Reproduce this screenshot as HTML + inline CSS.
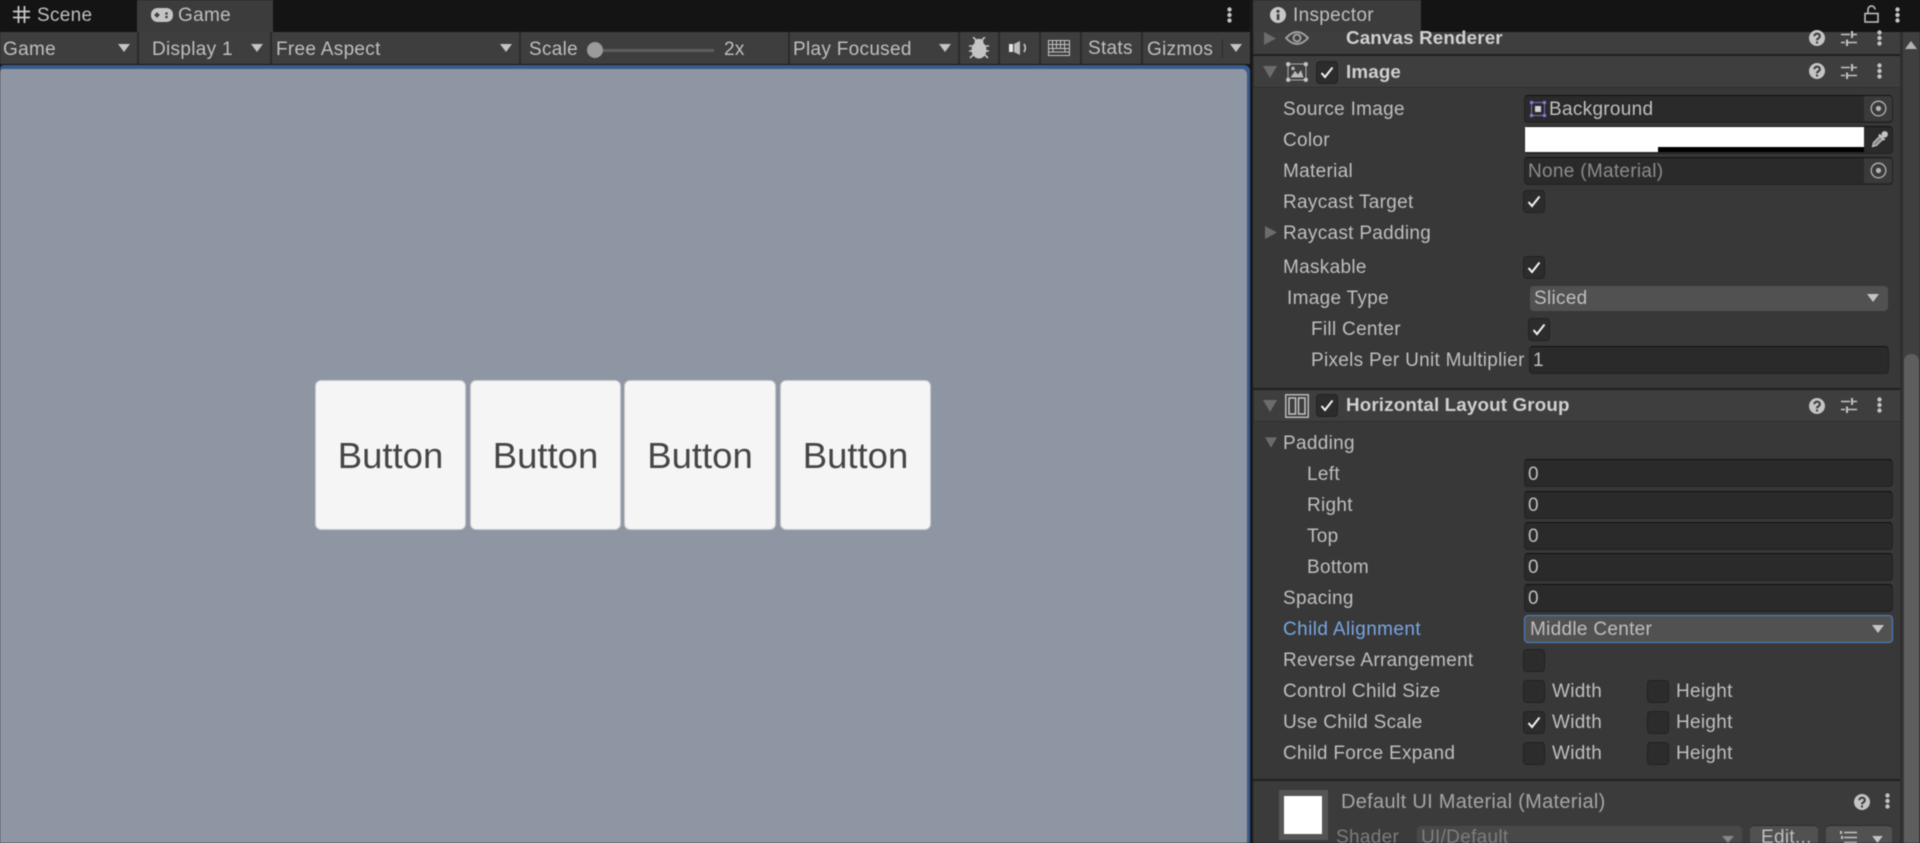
<!DOCTYPE html>
<html><head><meta charset="utf-8"><style>
html,body{margin:0;padding:0;width:1920px;height:843px;overflow:hidden;background:#191919}
body{position:relative;font-family:"Liberation Sans",sans-serif}
div,svg{position:absolute}
#w{left:0;top:0;width:1920px;height:843px;filter:blur(.45px)}
.t{white-space:nowrap;font-size:19px;line-height:22px;letter-spacing:.3px;color:#bfbfbf}
.b{font-weight:bold;color:#d0d0d0;font-size:18.8px;letter-spacing:.15px}
.d{color:#9a9a9a}
.sep{top:32px;height:32px;width:2px;background:#2b2b2b}
.f{left:1524px;width:367px;height:26px;background:#2a2a2a;border:1px solid #222;border-top-color:#111;border-radius:4px}
.c{width:20px;height:21px;background:#2c2c2c;border:1px solid #222;border-radius:4px}
.c svg{left:3px;top:4px}
.btn{top:380px;height:150px;background:#f5f5f5;border:1px solid #c6c8cc;border-radius:6px;box-sizing:border-box;color:#454545;font-size:36.5px;line-height:150px;text-align:center}
.hdr{left:1254px;width:646px;background:#3e3e3e}
</style></head><body>
<svg width="0" height="0" style="position:absolute"><defs>
<symbol id="dn" viewBox="0 0 12 8"><polygon points="0,0 12,0 6,8" fill="#c4c4c4"/></symbol>
<symbol id="fd" viewBox="0 0 14 12"><polygon points="0,0 14,0 7,12" fill="#6c6c6c"/></symbol>
<symbol id="fr" viewBox="0 0 12 13"><polygon points="0,0 12,6.500 0,13" fill="#6c6c6c"/></symbol>
<symbol id="ck" viewBox="0 0 14 13"><path d="M1.500 7 L5 11 L12.500 1.500" fill="none" stroke="#f2f2f2" stroke-width="2"/></symbol>
<symbol id="hp" viewBox="0 0 16 16"><circle cx="8" cy="8" r="8" fill="#c4c4c4"/><path d="M5.400 6.200 A2.700 2.500 0 1 1 9.600 8.200 Q8 9 8 10.400" fill="none" stroke="#3a3a3a" stroke-width="2"/><rect x="7" y="11.500" width="2" height="2" fill="#3a3a3a"/></symbol>
<symbol id="sl" viewBox="0 0 16 15"><path d="M0 3.500H9M12 3.500H16M7 11.500H16M0 11.500H4" fill="none" stroke="#c4c4c4" stroke-width="1.600"/><rect x="10" y="0" width="2" height="7" fill="#c4c4c4"/><rect x="5" y="8.500" width="2" height="6.500" fill="#c4c4c4"/></symbol>
<symbol id="dt" viewBox="0 0 5 16"><circle cx="2.500" cy="2.500" r="2.200" fill="#c4c4c4"/><circle cx="2.500" cy="8" r="2.200" fill="#c4c4c4"/><circle cx="2.500" cy="13.500" r="2.200" fill="#c4c4c4"/></symbol>
<symbol id="tg" viewBox="0 0 17 17"><circle cx="8.500" cy="8.500" r="7.300" fill="none" stroke="#b4b4b4" stroke-width="1.300"/><circle cx="8.500" cy="8.500" r="2.600" fill="#b4b4b4"/></symbol>
</defs></svg>
<div id="w">

<!-- top tab bars -->
<div style="left:0;top:0;width:1250px;height:32px;background:#141414"></div>
<div style="left:137px;top:0;width:136px;height:32px;background:#3c3c3c"></div>
<svg style="left:13px;top:6px" width="17" height="17" viewBox="0 0 17 17"><path d="M5.500 0V17M11.500 0V17M0 5.500H17M0 11.500H17" stroke="#c8c8c8" stroke-width="1.800" fill="none"/></svg>
<div class="t" style="left:37px;top:5px">Scene</div>
<svg style="left:151px;top:8px" width="22" height="14" viewBox="0 0 22 14"><rect x="0" y="0" width="22" height="14" rx="6.500" fill="#c4c4c4"/><rect x="3.500" y="6" width="5" height="2" fill="#3c3c3c"/><rect x="5" y="4.500" width="2" height="5" fill="#3c3c3c"/><circle cx="15.500" cy="5.500" r="1.300" fill="#3c3c3c"/><circle cx="15.500" cy="9" r="1.300" fill="#3c3c3c"/></svg>
<div class="t" style="left:178px;top:5px">Game</div>
<svg style="left:1227px;top:7px" width="5" height="16"><use href="#dt"/></svg>

<!-- toolbar -->
<div style="left:0;top:32px;width:1250px;height:32px;background:#3e3e3e"></div>
<div class="sep" style="left:137px"></div><div class="sep" style="left:270px"></div><div class="sep" style="left:519px"></div><div class="sep" style="left:788px"></div><div class="sep" style="left:958px"></div><div class="sep" style="left:998px"></div><div class="sep" style="left:1039px"></div><div class="sep" style="left:1080px"></div><div class="sep" style="left:1141px"></div>
<div style="left:1222px;top:39px;width:1px;height:19px;background:#2b2b2b"></div>
<div class="t" style="left:3px;top:39px">Game</div>
<svg style="left:118px;top:44px" width="12" height="8"><use href="#dn"/></svg>
<div class="t" style="left:152px;top:39px">Display 1</div>
<svg style="left:251px;top:44px" width="12" height="8"><use href="#dn"/></svg>
<div class="t" style="left:276px;top:39px">Free Aspect</div>
<svg style="left:500px;top:44px" width="12" height="8"><use href="#dn"/></svg>
<div class="t" style="left:529px;top:39px">Scale</div>
<div style="left:594px;top:48.500px;width:120px;height:3px;background:#5e5e5e"></div>
<div style="left:587px;top:42px;width:16px;height:16px;border-radius:50%;background:#9b9b9b"></div>
<div class="t" style="left:724px;top:39px">2x</div>
<div class="t" style="left:793px;top:39px">Play Focused</div>
<svg style="left:939px;top:44px" width="12" height="8"><use href="#dn"/></svg>
<svg style="left:969px;top:37px" width="20" height="22" viewBox="0 0 20 22"><ellipse cx="10" cy="13" rx="7.500" ry="8.500" fill="#c4c4c4"/><ellipse cx="10" cy="5" rx="4.500" ry="3.200" fill="#c4c4c4"/><path d="M4 0L7 3M16 0L13 3M0 9H4M20 9H16M0 14H4M20 14H16M1 21L4 18M19 21L16 18" stroke="#c4c4c4" stroke-width="1.600" fill="none"/></svg>
<svg style="left:1009px;top:41px" width="19" height="14" viewBox="0 0 19 14"><rect x="0" y="3" width="4" height="8" fill="#e6e6e6"/><polygon points="5,3 11,0 11,14 5,11" fill="#bdbdbd"/><path d="M15 3Q17.500 7 15 11" fill="none" stroke="#c4c4c4" stroke-width="1.700"/></svg>
<svg style="left:1048px;top:40px" width="22" height="16" viewBox="0 0 22 16"><path d="M.5 .5H21.500V15.500H.5ZM.5 4.500H21.500M.5 8.500H21.500M.5 12H21.500M4.500 .5V8.500M8.500 .5V8.500M12.500 .5V8.500M16.500 .5V8.500M5 8.500V12M17 8.500V12" fill="none" stroke="#c4c4c4" stroke-width="1"/></svg>
<div class="t" style="left:1088px;top:38px">Stats</div>
<div class="t" style="left:1147px;top:38.500px">Gizmos</div>
<svg style="left:1230px;top:44px" width="12" height="8"><use href="#dn"/></svg>

<!-- game view -->
<div style="left:0;top:65px;width:1250px;height:778px;background:#3a5a8e;border-radius:4px 6px 0 0"></div>
<div style="left:0;top:69px;width:1247px;height:774px;background:#8f96a3;border-radius:3px 5px 0 0"></div>
<div class="btn" style="left:315px;width:151px">Button</div>
<div class="btn" style="left:470px;width:151px">Button</div>
<div class="btn" style="left:624px;width:152px">Button</div>
<div class="btn" style="left:780px;width:151px">Button</div>

<!-- inspector -->
<div style="left:1250px;top:0;width:3px;height:843px;background:#191919"></div>
<div style="left:1253px;top:0;width:667px;height:32px;background:#141414"></div>
<div style="left:1253px;top:0;width:168px;height:32px;background:#3c3c3c"></div>
<svg style="left:1270px;top:7px" width="16" height="16" viewBox="0 0 16 16"><circle cx="8" cy="8" r="8" fill="#c8c8c8"/><rect x="6.800" y="7" width="2.600" height="6" fill="#3c3c3c"/><circle cx="8" cy="4.300" r="1.600" fill="#3c3c3c"/></svg>
<div class="t" style="left:1293px;top:5px">Inspector</div>
<svg style="left:1864px;top:5px" width="15" height="18" viewBox="0 0 15 18"><rect x="1" y="8.500" width="13" height="8.500" fill="none" stroke="#c4c4c4" stroke-width="1.500"/><path d="M4 8V4.500A3.500 3.500 0 0 1 11 4.500" fill="none" stroke="#c4c4c4" stroke-width="1.500"/></svg>
<svg style="left:1895px;top:7px" width="5" height="16"><use href="#dt"/></svg>

<div style="left:1253px;top:32px;width:647px;height:811px;background:#383838"></div>
<div style="left:1900px;top:32px;width:3px;height:811px;background:#2f2f2f"></div>
<div style="left:1903px;top:32px;width:17px;height:811px;background:#3f3f3f"></div>
<div style="left:1904px;top:354px;width:15px;height:489px;border-radius:7px 7px 0 0;background:#5e5e5e"></div>
<svg style="left:1905px;top:41px" width="12" height="8" viewBox="0 0 12 8"><polygon points="0,8 12,8 6,0" fill="#b4b4b4"/></svg>

<!-- canvas renderer -->
<div class="hdr" style="top:32px;height:22px"></div>
<div style="left:1253px;top:54px;width:647px;height:2px;background:#202020"></div>
<svg style="left:1264px;top:32px" width="12" height="13"><use href="#fr"/></svg>
<svg style="left:1285px;top:30px" width="24" height="16" viewBox="0 0 24 16"><path d="M1 8Q12 -4 23 8Q12 20 1 8Z" fill="none" stroke="#a0a0a0" stroke-width="2"/><circle cx="12" cy="8" r="3.500" fill="none" stroke="#a0a0a0" stroke-width="2"/></svg>
<div class="t b" style="left:1346px;top:27px">Canvas Renderer</div>
<svg style="left:1809px;top:30px" width="16" height="16"><use href="#hp"/></svg>
<svg style="left:1841px;top:31px" width="16" height="15"><use href="#sl"/></svg>
<svg style="left:1877px;top:30px" width="5" height="16"><use href="#dt"/></svg>

<!-- image -->
<div class="hdr" style="top:56px;height:31px"></div>
<div style="left:1254px;top:87px;width:646px;height:1px;background:#303030"></div>
<svg style="left:1263px;top:66px" width="14" height="12"><use href="#fd"/></svg>
<svg style="left:1286px;top:62px" width="22" height="20" viewBox="0 0 22 20"><rect x="2" y="2" width="18" height="16" fill="none" stroke="#aaa" stroke-width="1"/><path d="M4.500 15.500L9 9L12 12.500L15 8L17.500 15.500Z" fill="#bbb"/><circle cx="7" cy="6.500" r="1.700" fill="#bbb"/><g fill="#c4c4c4"><circle cx="2.200" cy="2.200" r="2.200"/><circle cx="19.800" cy="2.200" r="2.200"/><circle cx="2.200" cy="17.800" r="2.200"/><circle cx="19.800" cy="17.800" r="2.200"/></g></svg>
<div class="c" style="left:1316px;top:61px"><svg width="14" height="13"><use href="#ck"/></svg></div>
<div class="t b" style="left:1346px;top:61px">Image</div>
<svg style="left:1809px;top:63px" width="16" height="16"><use href="#hp"/></svg>
<svg style="left:1841px;top:64px" width="16" height="15"><use href="#sl"/></svg>
<svg style="left:1877px;top:63px" width="5" height="16"><use href="#dt"/></svg>

<div class="t" style="left:1283px;top:99px">Source Image</div>
<div class="f" style="top:95px"></div>
<div style="left:1864px;top:96px;width:28px;height:25px;background:#3a3a3a;border-radius:0 3px 3px 0"></div>
<svg style="left:1870px;top:100px" width="17" height="17"><use href="#tg"/></svg>
<svg style="left:1530px;top:101px" width="16" height="16" viewBox="0 0 16 16"><rect x="1.500" y="1.500" width="13" height="13" fill="none" stroke="#7d6fc6" stroke-width="1"/><g fill="#8a7bd6"><rect x="0" y="0" width="3" height="3"/><rect x="13" y="0" width="3" height="3"/><rect x="0" y="13" width="3" height="3"/><rect x="13" y="13" width="3" height="3"/></g><rect x="5" y="5" width="6" height="6" fill="#d0d0d0"/></svg>
<div class="t" style="left:1549px;top:99px">Background</div>

<div class="t" style="left:1283px;top:130px">Color</div>
<div class="f" style="top:126px"></div>
<div style="left:1525px;top:127px;width:339px;height:25px;background:#fff"></div>
<div style="left:1658px;top:147px;width:206px;height:5px;background:#000"></div>
<svg style="left:1871px;top:130px" width="18" height="18" viewBox="0 0 18 18"><path d="M1.500 16.500L2.500 12.500L9 6L12 9L5.500 15.500Z" fill="#8c8c8c" stroke="#c4c4c4" stroke-width="1.200"/><path d="M8 4.500L13.500 10" stroke="#c4c4c4" stroke-width="2.200" fill="none"/><circle cx="13.700" cy="4.300" r="3.200" fill="#c4c4c4"/></svg>

<div class="t" style="left:1283px;top:161px">Material</div>
<div class="f" style="top:157px"></div>
<div style="left:1864px;top:158px;width:28px;height:25px;background:#3a3a3a;border-radius:0 3px 3px 0"></div>
<svg style="left:1870px;top:162px" width="17" height="17"><use href="#tg"/></svg>
<div class="t d" style="left:1528px;top:161px;color:#8c8c8c">None (Material)</div>

<div class="t" style="left:1283px;top:191.500px">Raycast Target</div>
<div class="c" style="left:1523px;top:190px"><svg width="14" height="13"><use href="#ck"/></svg></div>
<svg style="left:1265px;top:226px" width="12" height="13"><use href="#fr"/></svg>
<div class="t" style="left:1283px;top:223px">Raycast Padding</div>
<div class="t" style="left:1283px;top:257px">Maskable</div>
<div class="c" style="left:1523px;top:256px"><svg width="14" height="13"><use href="#ck"/></svg></div>
<div class="t" style="left:1287px;top:288px">Image Type</div>
<div style="left:1530px;top:286px;width:358px;height:25px;background:#515151;border-radius:4px"></div>
<div class="t" style="left:1534px;top:287.500px">Sliced</div>
<svg style="left:1867px;top:294px" width="12" height="8"><use href="#dn"/></svg>
<div class="t" style="left:1311px;top:319px">Fill Center</div>
<div class="c" style="left:1528px;top:318px"><svg width="14" height="13"><use href="#ck"/></svg></div>
<div class="t" style="left:1311px;top:350px">Pixels Per Unit Multiplier</div>
<div class="f" style="left:1529px;top:346px;width:358px"></div>
<div class="t" style="left:1533px;top:349.500px">1</div>

<!-- horizontal layout group -->
<div style="left:1253px;top:388px;width:647px;height:2px;background:#202020"></div>
<div class="hdr" style="top:390px;height:31px"></div>
<div style="left:1254px;top:421px;width:646px;height:1px;background:#303030"></div>
<svg style="left:1263px;top:400px" width="14" height="12"><use href="#fd"/></svg>
<svg style="left:1285px;top:394px" width="24" height="24" viewBox="0 0 24 24"><rect x=".75" y=".75" width="22.500" height="22.500" fill="none" stroke="#b8b8b8" stroke-width="1.500"/><rect x="4" y="4" width="6.500" height="16" fill="none" stroke="#c4c4c4" stroke-width="1.500"/><rect x="13.500" y="4" width="6.500" height="16" fill="none" stroke="#c4c4c4" stroke-width="1.500"/></svg>
<div class="c" style="left:1316px;top:394px"><svg width="14" height="13"><use href="#ck"/></svg></div>
<div class="t b" style="left:1346px;top:394px">Horizontal Layout Group</div>
<svg style="left:1809px;top:398px" width="16" height="16"><use href="#hp"/></svg>
<svg style="left:1841px;top:398px" width="16" height="15"><use href="#sl"/></svg>
<svg style="left:1877px;top:397px" width="5" height="16"><use href="#dt"/></svg>

<svg style="left:1265px;top:437px" width="12" height="11"><use href="#fd"/></svg>
<div class="t" style="left:1283px;top:433px">Padding</div>
<div class="t" style="left:1307px;top:464px">Left</div><div class="f" style="top:459px"></div><div class="t" style="left:1528px;top:464px">0</div>
<div class="t" style="left:1307px;top:495px">Right</div><div class="f" style="top:491px"></div><div class="t" style="left:1528px;top:495px">0</div>
<div class="t" style="left:1307px;top:526px">Top</div><div class="f" style="top:522px"></div><div class="t" style="left:1528px;top:526px">0</div>
<div class="t" style="left:1307px;top:557px">Bottom</div><div class="f" style="top:553px"></div><div class="t" style="left:1528px;top:557px">0</div>
<div class="t" style="left:1283px;top:588px">Spacing</div><div class="f" style="top:584px"></div><div class="t" style="left:1528px;top:588px">0</div>
<div class="t" style="left:1283px;top:619px;color:#79a5e4;letter-spacing:.4px">Child Alignment</div>
<div class="f" style="top:615px;background:#515151;border:1px solid #4a84c9"></div>
<div class="t" style="left:1530px;top:619px">Middle Center</div>
<svg style="left:1872px;top:625px" width="12" height="8"><use href="#dn"/></svg>

<div class="t" style="left:1283px;top:650px">Reverse Arrangement</div>
<div class="c" style="left:1523px;top:649px"></div>
<div class="t" style="left:1283px;top:681px">Control Child Size</div>
<div class="c" style="left:1523px;top:680px"></div><div class="t" style="left:1552px;top:681px">Width</div>
<div class="c" style="left:1647px;top:680px"></div><div class="t" style="left:1676px;top:681px">Height</div>
<div class="t" style="left:1283px;top:712px">Use Child Scale</div>
<div class="c" style="left:1523px;top:711px"><svg width="14" height="13"><use href="#ck"/></svg></div><div class="t" style="left:1552px;top:712px">Width</div>
<div class="c" style="left:1647px;top:711px"></div><div class="t" style="left:1676px;top:712px">Height</div>
<div class="t" style="left:1283px;top:743px">Child Force Expand</div>
<div class="c" style="left:1523px;top:742px"></div><div class="t" style="left:1552px;top:743px">Width</div>
<div class="c" style="left:1647px;top:742px"></div><div class="t" style="left:1676px;top:743px">Height</div>

<!-- material -->
<div style="left:1253px;top:779px;width:647px;height:2px;background:#202020"></div>
<div style="left:1254px;top:781px;width:646px;height:62px;background:#3b3b3b"></div>
<div style="left:1279px;top:790px;width:49px;height:50px;background:#555"></div>
<div style="left:1284px;top:796px;width:38px;height:38px;background:#fff"></div>
<div class="t" style="left:1341px;top:791px;font-size:20px;color:#a6a6a6;letter-spacing:.3px">Default UI Material (Material)</div>
<svg style="left:1854px;top:794px" width="16" height="16"><use href="#hp"/></svg>
<svg style="left:1885px;top:793px" width="5" height="16"><use href="#dt"/></svg>
<div class="t" style="left:1336px;top:827px;color:#7c7c7c">Shader</div>
<div style="left:1417px;top:826px;width:325px;height:17px;background:#484848;border-radius:4px 4px 0 0"></div>
<div class="t" style="left:1421px;top:827px;color:#7e7e7e">UI/Default</div>
<svg style="left:1722px;top:836px" width="12" height="7" viewBox="0 0 12 7"><polygon points="0,0 12,0 6,7" fill="#888"/></svg>
<div style="left:1750px;top:825px;width:68px;height:18px;background:#515151;border-top:1px solid #2a2a2a;border-radius:4px 4px 0 0;box-sizing:border-box"></div>
<div class="t" style="left:1761px;top:827px">Edit...</div>
<div style="left:1826px;top:825px;width:66px;height:18px;background:#515151;border-top:1px solid #2a2a2a;border-radius:4px 4px 0 0;box-sizing:border-box"></div>
<svg style="left:1839px;top:831px" width="18" height="12" viewBox="0 0 18 12"><path d="M5 1.500H18M5 6.500H18M5 11.500H18" stroke="#c4c4c4" stroke-width="1.500"/><rect x="1" y="0" width="2" height="3" fill="#c4c4c4"/><rect x="2" y="5" width="2" height="3" fill="#c4c4c4"/></svg>
<svg style="left:1872px;top:836px" width="11" height="7"><use href="#dn"/></svg>
</div>
</body></html>
